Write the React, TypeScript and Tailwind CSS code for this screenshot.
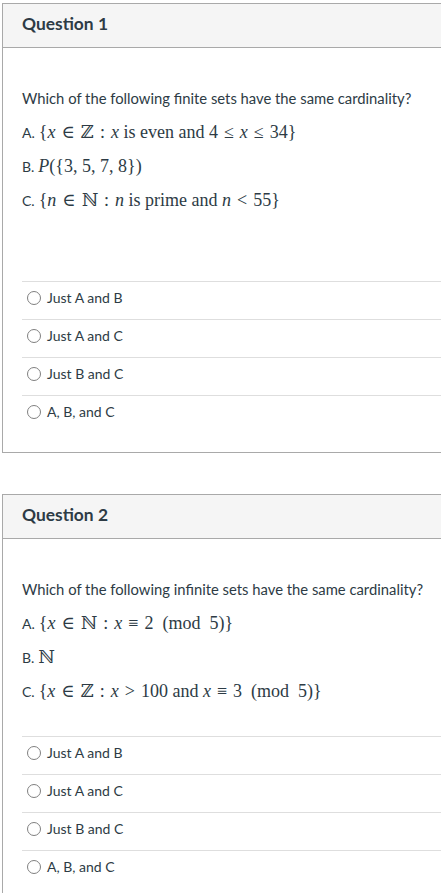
import type { ReactNode } from 'react'

const OPTIONS = ['Just A and B', 'Just A and C', 'Just B and C', 'A, B, and C']

function V({ children }: { children: ReactNode }) {
  return <i className="italic">{children}</i>
}

// relation symbol with KaTeX-like thick spacing
function Op({ children }: { children: ReactNode }) {
  return <span className="mx-[6px]">{children}</span>
}

function M({ children }: { children: ReactNode }) {
  return (
    <span className="font-['Liberation_Serif','DejaVu_Serif',serif] text-[18px] whitespace-pre">
      {children}
    </span>
  )
}

function Line({ label, children }: { label?: string; children: ReactNode }) {
  return (
    <div className="h-[34px] flex items-center whitespace-nowrap">
      {label && <span className="text-[14px] mr-[4px]">{label}</span>}
      {children}
    </div>
  )
}

function Question({
  title,
  prompt,
  lines,
  extraSpace,
}: {
  title: string
  prompt: string
  lines: ReactNode
  extraSpace: string
}) {
  return (
    <section className="ml-[2px] border border-r-0 border-[#a9a9a9] bg-white">
      <header className="h-[44px] bg-[#f5f5f5] border-b border-[#a9a9a9] pl-[19px] flex items-center">
        <h2 className="text-[17.4px] font-bold text-[#2d3b45] -mt-[3px]">{title}</h2>
      </header>
      <div className="pl-[19px] pt-[33px] pb-[19px]">
        <div className="text-[#2d3b45]">
          <Line>
            <span className="text-[14.8px]">{prompt}</span>
          </Line>
          {lines}
        </div>
        <div className={extraSpace} />
        <ul>
          {OPTIONS.map((opt) => (
            <li
              key={opt}
              className="h-[38px] pt-[6px] flex items-start gap-[6px] pl-[5px] border-t border-[#dedede]"
            >
              <span className="mt-[3px] w-[14px] h-[14px] rounded-full border border-[#808080] shrink-0" />
              <span className="text-[14px] leading-[20px] text-[#2d3b45]">{opt}</span>
            </li>
          ))}
        </ul>
      </div>
    </section>
  )
}

export default function App() {
  return (
    <div className="pt-[3px] pb-[20px] font-['Lato',sans-serif] bg-white min-h-screen overflow-hidden">
      <Question
        title="Question 1"
        prompt="Which of the following finite sets have the same cardinality?"
        extraSpace="h-[64px]"
        lines={
          <>
            <Line label="A.">
              <M>
                {'{'}<V>x</V><Op>∈</Op>ℤ<Op>:</Op><V>x</V> is even and 4<Op>≤</Op><V>x</V><Op>≤</Op>34{'}'}
              </M>
            </Line>
            <Line label="B.">
              <M>
                <V>P</V>({'{'}3, 5, 7, 8{'}'})
              </M>
            </Line>
            <Line label="C.">
              <M>
                {'{'}<V>n</V><Op>∈</Op>ℕ<Op>:</Op><V>n</V> is prime and <V>n</V><Op>{'<'}</Op>55{'}'}
              </M>
            </Line>
          </>
        }
      />
      <div className="h-[41px]" />
      <Question
        title="Question 2"
        prompt="Which of the following infinite sets have the same cardinality?"
        extraSpace="h-[28px]"
        lines={
          <>
            <Line label="A.">
              <M>
                {'{'}<V>x</V><Op>∈</Op>ℕ<Op>:</Op><V>x</V><Op>≡</Op>2  (mod  5){'}'}
              </M>
            </Line>
            <Line label="B.">
              <M>ℕ</M>
            </Line>
            <Line label="C.">
              <M>
                {'{'}<V>x</V><Op>∈</Op>ℤ<Op>:</Op><V>x</V><Op>{'>'}</Op>100 and <V>x</V><Op>≡</Op>3  (mod  5){'}'}
              </M>
            </Line>
          </>
        }
      />
    </div>
  )
}
